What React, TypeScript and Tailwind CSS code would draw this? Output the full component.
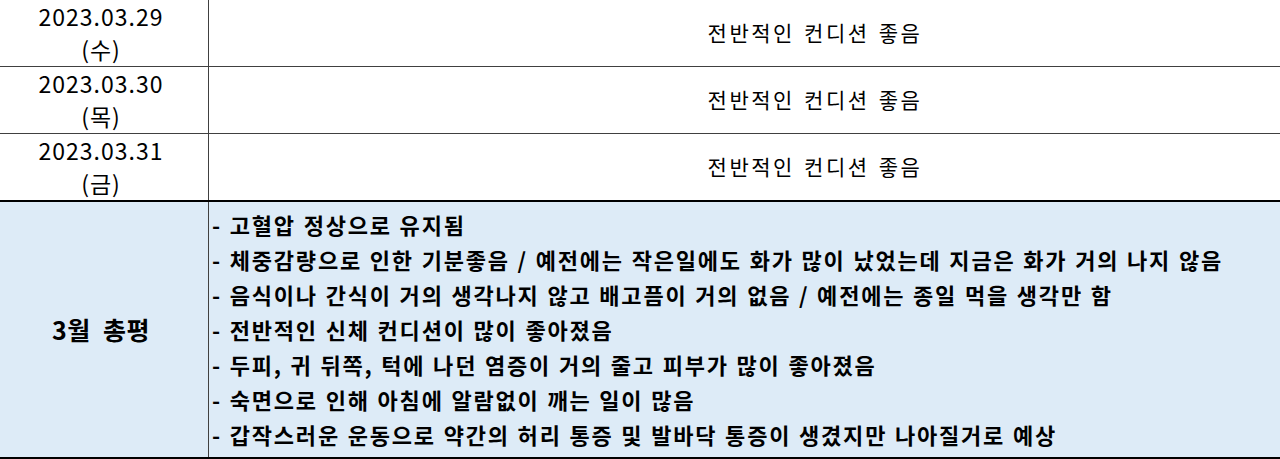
import React from 'react';

const days = [
  { date: '2023.03.29', day: '수' },
  { date: '2023.03.30', day: '목' },
  { date: '2023.03.31', day: '금' },
];

const summary = [
  '- 고혈압 정상으로 유지됨',
  '- 체중감량으로 인한 기분좋음 / 예전에는 작은일에도 화가 많이 났었는데 지금은 화가 거의 나지 않음',
  '- 음식이나 간식이 거의 생각나지 않고 배고픔이 거의 없음 / 예전에는 종일 먹을 생각만 함',
  '- 전반적인 신체 컨디션이 많이 좋아졌음',
  '- 두피, 귀 뒤쪽, 턱에 나던 염증이 거의 줄고 피부가 많이 좋아졌음',
  '- 숙면으로 인해 아침에 알람없이 깨는 일이 많음',
  '- 갑작스러운 운동으로 약간의 허리 통증 및 발바닥 통증이 생겼지만 나아질거로 예상',
];

export default function App() {
  return (
    <div
      className="w-[1280px] h-[459px] overflow-hidden bg-white text-black"
      style={{ fontFamily: '"Noto Sans CJK KR", "Noto Sans", sans-serif' }}
    >
      <div className="w-[1421px]">
        {days.map((d, i) => (
          <div
            key={d.date}
            className={
              'flex h-[67px] border-b ' + (i === 2 ? 'border-black' : 'border-[#404040]')
            }
          >
            <div className="w-[209px] shrink-0 pr-[6px] border-r border-[#404040] flex flex-col items-center text-[23px] leading-[33px] tracking-[1px]">
              <div>{d.date}</div>
              <div>({d.day})</div>
            </div>
            <div className="flex-1 flex items-center justify-center text-[21px] tracking-[2.5px] [word-spacing:2px]">
              전반적인 컨디션 좋음
            </div>
          </div>
        ))}
        <div className="flex h-[258px] bg-[#ddebf7] border-t border-b-2 border-black">
          <div className="w-[209px] shrink-0 pr-[6px] border-r border-[#404040] flex items-center justify-center font-bold text-[25px] tracking-[0.5px] [word-spacing:6px]">
            3월 총평
          </div>
          <div className="flex-1 flex flex-col justify-center pl-[3px] font-bold text-[22px] leading-[35px] tracking-[1.8px] [word-spacing:1px]">
            {summary.map((s) => (
              <div key={s} className="whitespace-pre">
                {s}
              </div>
            ))}
          </div>
        </div>
      </div>
    </div>
  );
}
